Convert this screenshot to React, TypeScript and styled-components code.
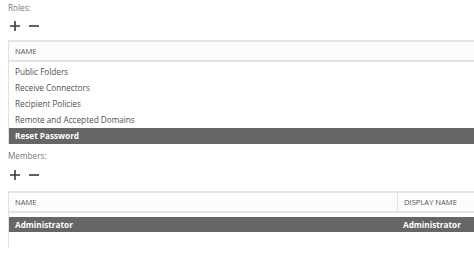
import styled, { createGlobalStyle } from 'styled-components';

const GlobalStyle = createGlobalStyle`
  html, body {
    margin: 0;
    padding: 0;
    background: #ffffff;
  }
  body {
    font-family: "Open Sans", "Noto Sans", sans-serif;
    color: #444444;
  }
`;

const Page = styled.div`
  width: 474px;
  height: 259px;
  overflow: hidden;
  padding: 2px 0 0 8px;
  box-sizing: border-box;
`;

const Section = styled.section<{ gap: number }>`
  margin-bottom: ${p => p.gap}px;
`;

const Label = styled.div`
  font-size: 8.2px;
  line-height: 12px;
  color: #777777;
`;

const Toolbar = styled.div<{ top: number; bottom: number }>`
  display: flex;
  align-items: center;
  gap: 9px;
  height: 12px;
  margin: ${p => p.top}px 0 ${p => p.bottom}px 2px;
`;

const IconButton = styled.button`
  display: flex;
  align-items: center;
  justify-content: center;
  width: 10px;
  height: 10px;
  padding: 0;
  border: 0;
  background: none;
  color: #3a3a3a;
`;

const Grid = styled.div<{ bodyHeight: number }>`
  width: 520px;
  border-left: 1px solid #e2e2e2;
  min-height: ${p => p.bodyHeight}px;
`;

const HeaderRow = styled.div`
  display: flex;
  height: 18px;
  border-top: 2px solid #e4e4e4;
  border-bottom: 2px solid #e4e4e4;
  background: #fcfcfc;
`;

const HeaderCell = styled.div<{ width?: number; divider?: boolean }>`
  display: flex;
  align-items: center;
  box-sizing: border-box;
  ${p => (p.width ? `width: ${p.width}px;` : 'flex: 1;')}
  padding-left: 6px;
  border-left: ${p => (p.divider ? '1px solid #e2e2e2' : 'none')};
  font-size: 7.6px;
  color: #555555;
  text-transform: uppercase;
`;

const Body = styled.div<{ top: number }>`
  padding-top: ${p => p.top}px;
`;

const Row = styled.div<{ selected?: boolean; height: number }>`
  display: flex;
  align-items: center;
  height: ${p => p.height}px;
  background: ${p => (p.selected ? '#666666' : 'transparent')};
  color: ${p => (p.selected ? '#ffffff' : '#505050')};
  font-weight: ${p => (p.selected ? 700 : 400)};
  font-size: 8.2px;
`;

const Cell = styled.div<{ width?: number }>`
  box-sizing: border-box;
  ${p => (p.width ? `width: ${p.width}px;` : 'flex: 1;')}
  padding-left: 6px;
  white-space: nowrap;
`;

function PlusIcon() {
  return (
    <svg width="10" height="10" viewBox="0 0 10 10">
      <path d="M5 0v10M0 5h10" stroke="currentColor" strokeWidth="1.6" />
    </svg>
  );
}

function MinusIcon() {
  return (
    <svg width="10" height="10" viewBox="0 0 10 10">
      <path d="M0 5h10" stroke="currentColor" strokeWidth="1.6" />
    </svg>
  );
}

const roles = [
  'Public Folders',
  'Receive Connectors',
  'Recipient Policies',
  'Remote and Accepted Domains',
  'Reset Password',
];

function App() {
  return (
    <Page>
      <GlobalStyle />
      <Section gap={6}>
        <Label>Roles:</Label>
        <Toolbar top={6} bottom={8}>
          <IconButton><PlusIcon /></IconButton>
          <IconButton><MinusIcon /></IconButton>
        </Toolbar>
        <Grid bodyHeight={0}>
          <HeaderRow>
            <HeaderCell>Name</HeaderCell>
          </HeaderRow>
          <Body top={1}>
            {roles.map((r, i) => (
              <Row key={r} height={16.2} selected={i === roles.length - 1}>
                <Cell>{r}</Cell>
              </Row>
            ))}
          </Body>
        </Grid>
      </Section>
      <Section gap={0}>
        <Label>Members:</Label>
        <Toolbar top={7} bottom={10}>
          <IconButton><PlusIcon /></IconButton>
          <IconButton><MinusIcon /></IconButton>
        </Toolbar>
        <Grid bodyHeight={57}>
          <HeaderRow>
            <HeaderCell width={388}>Name</HeaderCell>
            <HeaderCell divider>Display Name</HeaderCell>
          </HeaderRow>
          <Body top={4}>
            <Row height={15} selected>
              <Cell width={388}>Administrator</Cell>
              <Cell>Administrator</Cell>
            </Row>
          </Body>
        </Grid>
      </Section>
    </Page>
  );
}

export default App;
